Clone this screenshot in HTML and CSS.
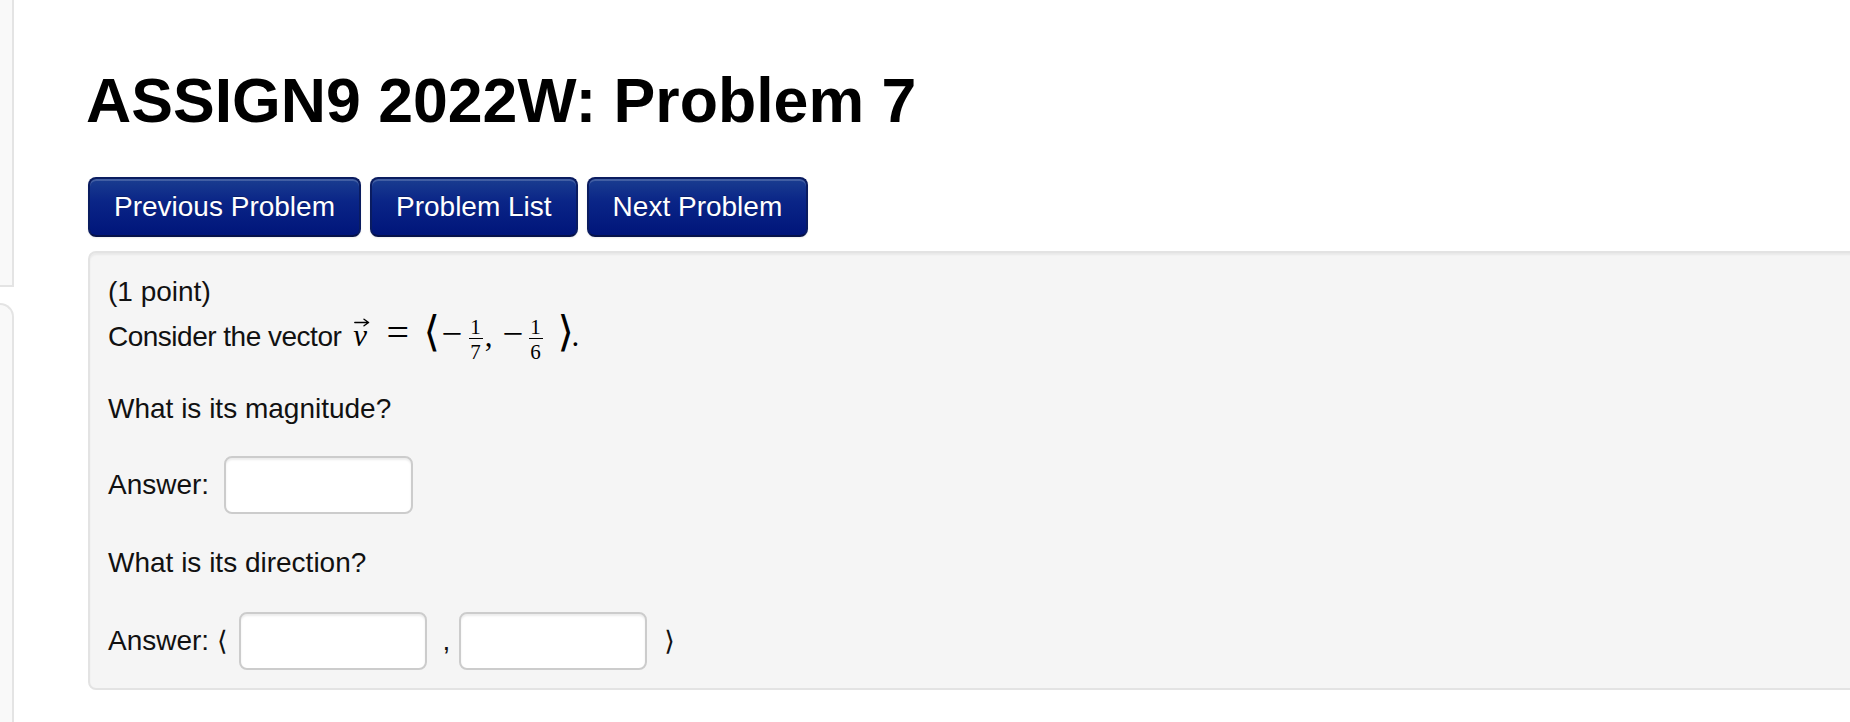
FILE: index.html
```html
<!DOCTYPE html>
<html lang="en">
<head>
<meta charset="utf-8">
<title>ASSIGN9 2022W: Problem 7</title>
<link rel="stylesheet" href="styles.css">
</head>
<body>
<div class="page">
  <aside class="side">
    <div class="side-top"></div>
    <div class="side-bottom"></div>
  </aside>
  <main class="main">
    <h1 class="title">ASSIGN9 2022W: Problem 7</h1>
    <div class="nav">
      <a class="btn" href="#">Previous Problem</a>
      <a class="btn" href="#">Problem List</a>
      <a class="btn" href="#">Next Problem</a>
    </div>
    <div class="well">
      <div class="line">(1 point)</div>
      <div class="line"><span class="lead">Consider the vector </span><span class="math"><span class="vec"><i>v</i><svg class="arrow" width="16" height="9" viewBox="0 0 16 9"><path d="M0.8 4.5 H14 M10 1.2 L14.6 4.5 L10 7.8" fill="none" stroke="#000" stroke-width="1.4" stroke-linecap="round" stroke-linejoin="round"/></svg></span><span class="m eq">=</span><span class="m big lang">⟨</span><span class="m minus">−</span><span class="frac"><span class="num">1</span><span class="bar"></span><span class="den">7</span></span><span class="m comma-m">,</span><span class="m minus minus2">−</span><span class="frac frac2"><span class="num">1</span><span class="bar"></span><span class="den">6</span></span><span class="m big rang">⟩</span><span class="m dot">.</span></span></div>
      <div class="line q1">What is its magnitude?</div>
      <div class="ans a1"><span class="label">Answer:</span><input class="field f1" type="text"></div>
      <div class="line q2">What is its direction?</div>
      <div class="ans a2"><span class="label">Answer: <span class="ang">⟨</span></span><input class="field f2" type="text"><span class="sep">,</span><input class="field f3" type="text"><span class="ang rclose">⟩</span></div>
    </div>
  </main>
</div>
</body>
</html>
```

FILE: styles.css
```css
html, body {
  margin: 0;
  padding: 0;
  background: #ffffff;
  overflow: hidden;
}

body {
  font-family: "Liberation Sans", Arial, Helvetica, sans-serif;
  color: #111111;
}

.page {
  display: flex;
  width: 1850px;
  height: 722px;
}

.side {
  width: 14px;
  flex: 0 0 14px;
  display: flex;
  flex-direction: column;
  gap: 16px;
}

.side-top {
  height: 287px;
  background: #f9f9f9;
  border-right: 2px solid #e4e4e4;
  border-bottom: 2px solid #e4e4e4;
  box-sizing: border-box;
}

.side-bottom {
  flex: 1;
  background: #f9f9f9;
  border-top: 2px solid #e4e4e4;
  border-right: 2px solid #e4e4e4;
  border-top-right-radius: 14px;
  box-sizing: border-box;
}

.main {
  flex: 1;
  padding-left: 74px;
  min-width: 0;
}

.title {
  margin: 65px 0 0 -2px;
  font-size: 62.6px;
  line-height: 70px;
  font-weight: bold;
  color: #000000;
  letter-spacing: 0;
}

.nav {
  margin-top: 42px;
  display: flex;
  gap: 9px;
}

.btn {
  display: block;
  box-sizing: border-box;
  height: 60px;
  padding: 8px 24px;
  font-size: 28px;
  line-height: 40px;
  color: #ffffff;
  text-decoration: none;
  border: 2px solid #0a1c60;
  border-bottom-color: #06124a;
  border-radius: 8px;
  background: linear-gradient(to bottom, #1a3d90 0%, #0a2587 40%, #00157a 100%);
  box-shadow: inset 0 2px 0 rgba(255, 255, 255, 0.18), 0 1px 2px rgba(0, 0, 0, 0.08);
  text-shadow: 0 -1px 0 rgba(0, 0, 0, 0.25);
}

.well {
  margin-top: 14px;
  margin-right: -60px;
  box-sizing: border-box;
  height: 439px;
  padding: 19px 18px 18px 18px;
  background: #f5f5f5;
  border: 2px solid #e3e3e3;
  border-radius: 8px;
  box-shadow: inset 0 2px 2px rgba(0, 0, 0, 0.05);
  font-size: 28px;
}

.line {
  height: 40px;
  line-height: 40px;
  white-space: nowrap;
}

.lead {
  letter-spacing: -0.5px;
}

.q1 { margin-top: 37px; }
.q2 { margin-top: 29px; }

.ans {
  display: flex;
  align-items: center;
  height: 58px;
  line-height: 40px;
  white-space: nowrap;
}

.a1 { margin-top: 27px; }
.a2 { margin-top: 29px; }

.field {
  box-sizing: border-box;
  height: 58px;
  padding: 8px 12px;
  margin: 0;
  background: #ffffff;
  border: 2px solid #cccccc;
  border-radius: 8px;
  box-shadow: inset 0 2px 2px rgba(0, 0, 0, 0.075);
  font-size: 28px;
  font-family: inherit;
  outline: none;
}

.f1 { width: 189px; margin-left: 15px; }
.f2 { width: 188px; margin-left: 12px; }
.f3 { width: 188px; }

.ang {
  font-family: "DejaVu Sans", sans-serif;
  font-size: 27px;
}

.sep {
  margin-left: 15px;
  margin-right: 9px;
}

.rclose { margin-left: 17px; }

/* math */
.math {
  font-family: "Liberation Serif", "DejaVu Serif", serif;
  font-size: 31px;
  color: #000000;
}

.math .m {
  display: inline-block;
  text-align: center;
  line-height: 40px;
}

.vec {
  position: relative;
  display: inline-block;
  width: 15px;
  margin-left: 4px;
  text-align: center;
  line-height: 40px;
}

.vec i {
  font-style: italic;
}

.arrow {
  position: absolute;
  left: 1px;
  top: 2px;
}

.eq {
  width: 21px;
  margin-left: 19px;
  font-size: 40px;
}

.big {
  font-family: "DejaVu Sans", sans-serif;
  font-size: 42px;
  vertical-align: 0;
}

.lang { width: 15px; margin-left: 16px; }
.minus { width: 19px; margin-left: 3px; font-size: 37px; }
.minus2 { margin-left: 10px; }
.comma-m { width: 8px; margin-left: 2px; }
.rang { width: 12px; margin-left: 15px; }
.dot { width: 6px; margin-left: 2px; }

.frac {
  display: inline-flex;
  flex-direction: column;
  align-items: center;
  width: 14px;
  margin-left: 8px;
  font-size: 21px;
  line-height: 1;
  vertical-align: 12px;
}

.frac2 { margin-left: 7px; }

.frac .bar {
  align-self: stretch;
  height: 0;
  border-top: 1.3px solid #000000;
  margin: 0 0 3px 0;
}
```
